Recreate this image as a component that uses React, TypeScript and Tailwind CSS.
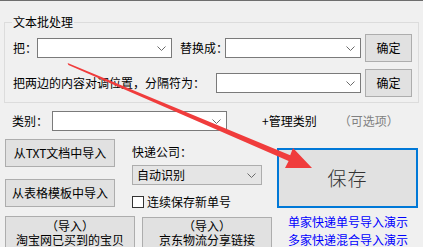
import React from 'react'

const font = "font-['Noto_Sans_CJK_SC',sans-serif]"

function Chevron() {
  return (
    <svg width="9" height="5" viewBox="0 0 9 5" className="shrink-0">
      <polyline points="0.5,0.5 4.5,4.5 8.5,0.5" fill="none" stroke="#6b6b6b" strokeWidth="1" />
    </svg>
  )
}

function Combo({ w, label }: { w: string; label?: string }) {
  return (
    <div className={`${w} h-[20px] bg-white border border-[#7a7a7a] flex items-center justify-between pl-[4px] pr-[5px]`}>
      <span className="text-[12px] leading-none">{label}</span>
      <Chevron />
    </div>
  )
}

function Btn({ className, children }: { className: string; children: React.ReactNode }) {
  return (
    <div className={`${className} bg-[#e1e1e1] border border-[#adadad] flex items-center justify-center text-[12px] text-black`}>
      {children}
    </div>
  )
}

export default function App() {
  return (
    <div className={`relative w-[423px] h-[247px] overflow-hidden bg-[#f0f0f0] border-t border-[#6e6e6e] text-black ${font}`}>
      {/* 文本批处理 */}
      <div className="mx-[4px] mt-[21px] border border-[#dcdcdc] pb-[5px]">
        <div className="-mt-[9px] ml-[7px] w-fit px-[1px] bg-[#f0f0f0] text-[12px] leading-[16px]">文本批处理</div>

        <div className="mt-[4px] pl-[8px] flex items-center h-[28px]">
          <span className="w-[24px] text-[12px] whitespace-nowrap">把：</span>
          <Combo w="w-[135px]" />
          <span className="ml-[8px] w-[45px] text-[12px] whitespace-nowrap">替换成：</span>
          <Combo w="w-[136px]" />
          <Btn className="ml-[4px] w-[47px] h-[28px]">确定</Btn>
        </div>

        <div className="mt-[7px] pl-[8px] flex items-center h-[28px]">
          <span className="w-[203px] text-[12px] whitespace-nowrap">把两边的内容对调位置，分隔符为：</span>
          <Combo w="w-[145px]" />
          <Btn className="ml-[4px] w-[47px] h-[28px]">确定</Btn>
        </div>
      </div>

      {/* 类别 */}
      <div className="mt-[8px] pl-[12px] flex items-center h-[20px] text-[12px]">
        <span className="w-[40px] whitespace-nowrap">类别：</span>
        <Combo w="w-[175px]" />
        <span className="ml-[35px] whitespace-nowrap">+管理类别</span>
        <span className="ml-[22px] whitespace-nowrap text-[#808080]">（可选项）</span>
      </div>

      {/* 导入 / 快递 / 保存 */}
      <div className="mt-[8px] flex">
        <div className="ml-[5px] w-[110px] flex flex-col gap-[12px]">
          <Btn className="h-[28px]">从TXT文档中导入</Btn>
          <Btn className="h-[28px]">从表格模板中导入</Btn>
        </div>

        <div className="ml-[17px] w-[130px] flex flex-col text-[12px]">
          <div className="h-[26px] flex items-center">快递公司：</div>
          <div className="h-[20px] bg-[#e5e5e5] border border-[#adadad] flex items-center justify-between pl-[4px] pr-[5px]">
            <span className="leading-none">自动识别</span>
            <Chevron />
          </div>
          <div className="mt-[10px] flex items-center h-[14px]">
            <div className="w-[12px] h-[12px] bg-white border border-[#333333]" />
            <span className="ml-[3px] whitespace-nowrap">连续保存新单号</span>
          </div>
        </div>

        <div className="ml-[15px] mt-[9px] w-[141px] h-[60px] bg-[#e1e1e1] border-2 border-[#0078d7] flex items-center justify-center">
          <span className="text-[19px] font-light text-[#333333] tracking-[1px]">保存</span>
        </div>
      </div>

      {/* 底部 */}
      <div className="mt-[7px] flex">
        <div className="ml-[5px] w-[130px] h-[40px] bg-[#e1e1e1] border border-[#adadad] pt-[2px] flex flex-col items-center text-[12px] leading-[14px]">
          <span>（导入）</span>
          <span>淘宝网已买到的宝贝</span>
        </div>
        <div className="ml-[7px] mt-[1px] w-[130px] h-[40px] bg-[#e1e1e1] border border-[#adadad] pt-[1px] flex flex-col items-center text-[12px] leading-[14px]">
          <span>（导入）</span>
          <span>京东物流分享链接</span>
        </div>
        <div className="ml-[16px] -mt-[3px] flex flex-col text-[12px] leading-[18px] text-[#0000ff] whitespace-nowrap">
          <span>单家快递单号导入演示</span>
          <span>多家快递混合导入演示</span>
        </div>
      </div>

      {/* 红色箭头 */}
      <svg className="absolute inset-0 pointer-events-none" width="423" height="247" viewBox="0 0 423 247">
        <polygon
          points="67.6,62.1 68.4,63.9 288.6,159.9 285,167 312,167 293,147 290.2,154.2"
          fill="#f03c3c"
        />
      </svg>
    </div>
  )
}
